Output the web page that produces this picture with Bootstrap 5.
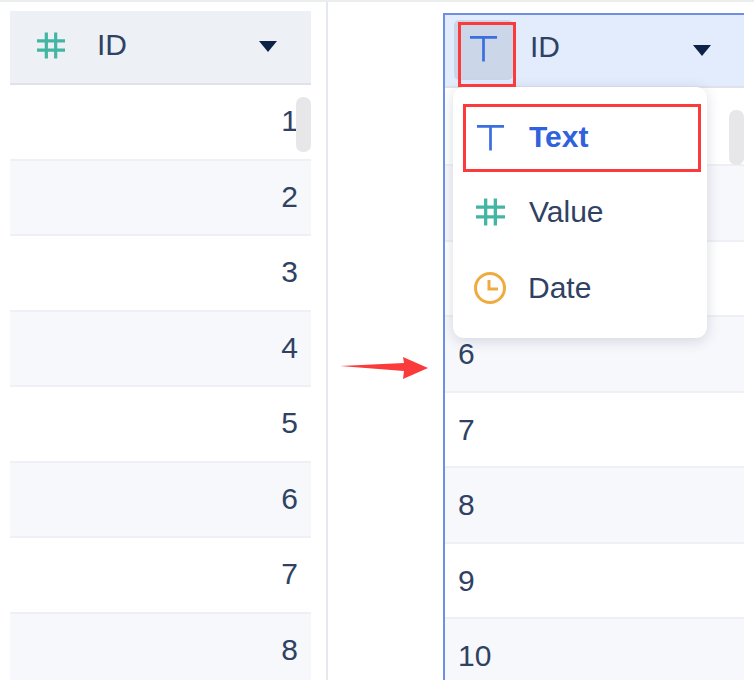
<!DOCTYPE html>
<html lang="en">
<head>
  <meta charset="UTF-8" />
  <meta name="viewport" content="width=device-width, initial-scale=1.0" />
  <title>Column type</title>
  <link href="https://cdn.jsdelivr.net/npm/bootstrap@5.3.0/dist/css/bootstrap.min.css" rel="stylesheet">
  <style>
    body {
      font-family: "Liberation Sans", Arial, sans-serif;
      font-size: 30px;
      line-height: 1;
      color: #2f4263;
      background: #fff;
      width: 754px;
      height: 680px;
      overflow: hidden;
      border-top: 2px solid #eceded;
    }
    .stage { height: 678px; overflow: hidden; }
    .left-pane { width: 328px; padding: 9px 15px 0 10px; border-right: 2px solid #e6e8f0; height: 678px; overflow: hidden; flex: none; position: relative; }
    .gap-pane { width: 115px; flex: none; position: relative; }
    .right-pane { width: 301px; margin-top: 11px; flex: none; position: relative; border-left: 2px solid #6f8fe3; height: 667px; overflow: hidden; }

    .col-head { height: 74px; background: #edf0f5; border-bottom: 2px solid #dfe2ea; padding-bottom: 4px; }
    .right-pane .col-head { height: 75px; background: #e2ecfd; border-top: 2px solid #6f8fe3; padding-bottom: 2px; }
    .right-pane .head-label { margin-bottom: 6px; }
    .right-pane .type-btn svg { margin-bottom: 4px; }
    .left-pane .col-head .head-icon { width: 71px; padding-left: 27px; }
    .right-pane .col-head .head-icon { width: 69px; }
    .head-label { padding-left: 16px; }
    .type-btn { width: 59px; height: 60px; margin-left: 9px; background: #cbd7e9; border-radius: 5px; }
    .caret-down { width: 0; height: 0; border-left: 9px solid transparent; border-right: 9px solid transparent; border-top: 11px solid #0e2147; margin-left: auto; margin-top: 3px; }
    .left-pane .caret-down { margin-right: 34px; }
    .right-pane .caret-down { margin-right: 33px; margin-top: 1px; }

    .data-row { height: 75.5px; border-bottom: 2px solid #eff0f6; padding: 0 13px; background: #fff; }
    .data-row.alt { background: #f7f8fc; }
    .left-pane .data-row { text-align: right; padding: 21px 13px 0 0; }
    .right-pane .data-row { padding-top: 22px; }
    .right-pane .data-row.first-row { height: 78px; }

    .scroll-thumb { position: absolute; width: 15px; height: 55px; background: #e7e7e9; border-radius: 7px; }
    .left-pane .scroll-thumb { left: 296px; top: 95px; }
    .right-pane .scroll-thumb { left: 284px; top: 97px; }

    .type-menu { position: absolute; left: 8px; top: 74px; width: 254px; height: 251px; background: #fff; border-radius: 11px; box-shadow: 0 3px 14px rgba(50, 60, 90, .18); padding-top: 12px; }
    .type-item { height: 75.5px; padding-left: 23px; gap: 24px; }
    .type-item.active { color: #2f62dc; font-weight: 700; }
    .type-item svg { flex: none; }
    .clock-icon { margin: 0 -2px 0 -2px; }

    .red-box { position: absolute; border: 3px solid #fb3b3b; }
    .box-icon { left: 13px; top: 9px; width: 58px; height: 65px; }
    .box-text { left: 18px; top: 91px; width: 238px; height: 68px; }
    .red-arrow { position: absolute; left: 12px; top: 355px; }
  </style>
</head>
<body>
  <div class="stage d-flex">
    <div class="left-pane">
      <div class="col-head d-flex align-items-center">
        <div class="head-icon d-flex">
          <svg width="28" height="27" viewBox="0 0 30 28" fill="none" stroke="#43b5a3" stroke-width="3.4"><path d="M10 0v28M20 0v28M0 9h30M0 19h30"/></svg>
        </div>
        <span class="head-label">ID</span>
        <span class="caret-down"></span>
      </div>
      <div class="data-row">1</div>
      <div class="data-row alt">2</div>
      <div class="data-row">3</div>
      <div class="data-row alt">4</div>
      <div class="data-row">5</div>
      <div class="data-row alt">6</div>
      <div class="data-row">7</div>
      <div class="data-row alt">8</div>
      <div class="scroll-thumb"></div>
    </div>

    <div class="gap-pane">
      <svg class="red-arrow" width="90" height="26" viewBox="0 0 90 26"><path d="M0 9 L64 6 L63 0 L88 11 L63 22 L64 14 Z" fill="#fb3b3b"/></svg>
    </div>

    <div class="right-pane">
      <div class="col-head d-flex align-items-center">
        <div class="head-icon d-flex">
          <div class="type-btn d-flex align-items-center justify-content-center">
            <svg width="29" height="28" viewBox="0 0 30 28" fill="none" stroke="#3b6ee0" stroke-width="2.8"><path d="M1 3h28M15 3v25"/></svg>
          </div>
        </div>
        <span class="head-label">ID</span>
        <span class="caret-down"></span>
      </div>
      <div class="data-row first-row">3</div>
      <div class="data-row alt">4</div>
      <div class="data-row">5</div>
      <div class="data-row alt">6</div>
      <div class="data-row">7</div>
      <div class="data-row alt">8</div>
      <div class="data-row">9</div>
      <div class="data-row alt">10</div>
      <div class="scroll-thumb"></div>
      <div class="type-menu">
        <div class="type-item active d-flex align-items-center">
          <svg width="29" height="28" viewBox="0 0 30 28" fill="none" stroke="#3b6ee0" stroke-width="2.8"><path d="M1 3h28M15 3v25"/></svg>
          <span>Text</span>
        </div>
        <div class="type-item d-flex align-items-center">
          <svg width="29" height="28" viewBox="0 0 30 28" fill="none" stroke="#43b5a3" stroke-width="3.4"><path d="M10 0v28M20 0v28M0 9h30M0 19h30"/></svg>
          <span>Value</span>
        </div>
        <div class="type-item d-flex align-items-center">
          <svg width="32" height="32" viewBox="0 0 32 32" fill="none" stroke="#f0ab3f" stroke-width="3" class="clock-icon"><circle cx="16" cy="16" r="14.5"/><path d="M15 8v9h9"/></svg>
          <span>Date</span>
        </div>
      </div>
      <div class="red-box box-icon"></div>
      <div class="red-box box-text"></div>
    </div>
  </div>
  <script src="https://cdn.jsdelivr.net/npm/bootstrap@5.3.0/dist/js/bootstrap.bundle.min.js"></script>
</body>
</html>
